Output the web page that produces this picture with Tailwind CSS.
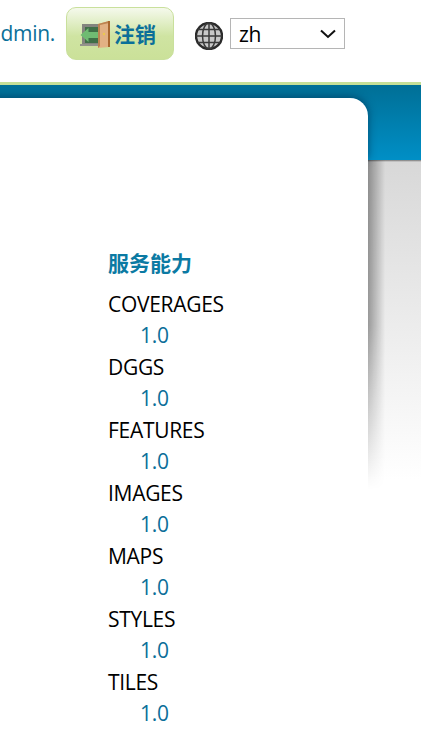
<!DOCTYPE html>
<html><head><meta charset="utf-8"><script src="https://cdn.jsdelivr.net/npm/@tailwindcss/browser@4"></script></head>
<body class="bg-white overflow-hidden">
<div class="w-[421px] h-[733px] overflow-hidden font-['Open_Sans','Noto_Sans_CJK_SC',sans-serif] text-[21px] tracking-[-0.3px]">
  <header class="h-[85px] border-b-[3px] border-[#c6df97] flex items-start relative">
    <a class="absolute right-[366px] top-[20px] leading-[26px] whitespace-nowrap text-[#0b6f99]">admin.</a>
    <a class="ml-[66px] mt-[7px] w-[108px] h-[53px] rounded-[10px] border border-[#c9e09c] bg-linear-to-b from-[#f5f9ec] via-[#cfe4a2] via-55% to-[#cbe199] flex items-center pl-[13px] gap-[2px]">
      <svg width="32" height="30" viewBox="0 0 32 30">
        <rect x="2" y="5" width="17" height="21" fill="#83857e"/>
        <rect x="5" y="8" width="14" height="16" fill="#3f6f47"/>
        <path d="M0.500 16l8-7v4h10v6H8.500v4z" fill="#6fbb72"/>
        <rect x="0" y="25" width="18" height="2" fill="#93938c"/>
        <path d="M18 5l11-3v26l-11 1z" fill="#e2b184"/>
        <path d="M18 5l11-3v2l-9 2v21l-2 2z" fill="#bd8350"/>
        <rect x="28" y="2" width="2" height="26" fill="#a9672f"/>
        <circle cx="24" cy="15" r="1.200" fill="#ecc94f"/>
      </svg>
      <span class="text-[#0b6f99] font-bold tracking-normal leading-none font-['Noto_Sans_CJK_SC',sans-serif]">注销</span>
    </a>
    <svg class="ml-[21px] mt-[22px]" width="28" height="28" viewBox="0 0 28 28" fill="none" stroke="#3a3a3a" stroke-width="1.500">
      <circle cx="14" cy="14" r="13" fill="#c8c8c8" stroke="#2a2a2a" stroke-width="2.400"/>
      <ellipse cx="14" cy="14" rx="6.500" ry="13"/>
      <path d="M14 1v26M1 14h26M3 7.500h22M3 20.500h22"/>
    </svg>
    <div class="relative ml-[7px] mt-[18px]">
      <select class="block w-[115px] h-[31px] border border-[#b5b5b5] bg-white text-black pl-[8px] appearance-none">
        <option>zh</option>
      </select>
      <svg class="absolute right-[9px] top-[11px] pointer-events-none" width="16" height="10" viewBox="0 0 16 10" fill="none" stroke="#111" stroke-width="2"><path d="M1 1.500l7 6.500 7-6.500"/></svg>
    </div>
  </header>
  <main class="relative h-[648px] bg-[linear-gradient(#006f96,#008fc6_75px,#777_75px,#d8d8d8_77px,#fff_395px)]">
    <div class="absolute left-[368px] top-[75px] w-[17px] h-[330px] bg-linear-to-r from-black/35 to-transparent mask-b-from-50% mask-b-to-100%"></div>
    <div class="absolute -left-[20px] top-[13px] w-[388px] h-[62px] rounded-tr-[18px] shadow-[0_-1px_9px_rgba(0,40,70,.6)]"></div>
    <div class="absolute -left-[20px] top-[13px] w-[388px] h-[640px] bg-white rounded-tr-[18px] pl-[128px] pt-[148px]">
      <h2 class="text-[#0b7aa3] font-bold tracking-normal leading-[32px] font-['Noto_Sans_CJK_SC',sans-serif] mb-[10px]">服务能力</h2>
      <ul class="leading-[31.500px] text-black">
        <li><div class="pt-[2px] leading-[29.500px]">COVERAGES</div><div class="pl-[32px] text-[#0b6f99]">1.0</div></li>
        <li><div class="pt-[2px] leading-[29.500px]">DGGS</div><div class="pl-[32px] text-[#0b6f99]">1.0</div></li>
        <li><div class="pt-[2px] leading-[29.500px]">FEATURES</div><div class="pl-[32px] text-[#0b6f99]">1.0</div></li>
        <li><div class="pt-[2px] leading-[29.500px]">IMAGES</div><div class="pl-[32px] text-[#0b6f99]">1.0</div></li>
        <li><div class="pt-[2px] leading-[29.500px]">MAPS</div><div class="pl-[32px] text-[#0b6f99]">1.0</div></li>
        <li><div class="pt-[2px] leading-[29.500px]">STYLES</div><div class="pl-[32px] text-[#0b6f99]">1.0</div></li>
        <li><div class="pt-[2px] leading-[29.500px]">TILES</div><div class="pl-[32px] text-[#0b6f99]">1.0</div></li>
      </ul>
    </div>
  </main>
</div>
</body></html>
